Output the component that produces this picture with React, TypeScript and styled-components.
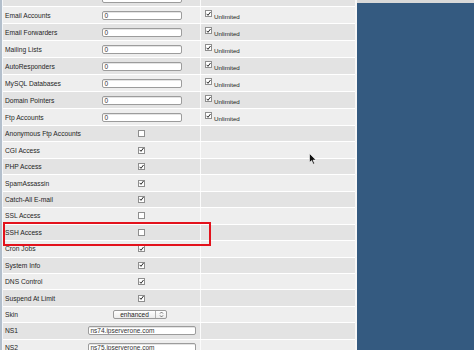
import React from "react";
import styled, { createGlobalStyle } from "styled-components";

const Global = createGlobalStyle`
  html, body { margin: 0; padding: 0; }
  body {
    width: 474px;
    height: 350px;
    overflow: hidden;
    background: #ffffff;
    font-family: "Liberation Sans", Arial, sans-serif;
  }
`;

const Page = styled.div`
  position: relative;
  display: flex;
  width: 474px;
  height: 350px;
  overflow: hidden;
`;

const LeftFrame = styled.div`
  width: 2px;
  background: #b3bfcc;
  border-right: 1px solid #f4f6f8;
  flex: none;
`;

const Viewport = styled.div`
  width: 352px;
  flex: none;
  overflow: hidden;
  border-right: 2px solid #f7f7f7;
`;

const Table = styled.div`
  display: flex;
  flex-direction: column;
  margin-top: -10px;
`;

const Row = styled.div<{ $dark: boolean; $h: number }>`
  display: grid;
  grid-template-columns: 80px 117px 1px 1fr;
  height: ${(p) => p.$h}px;
  border-bottom: 1px solid #ffffff;
  background: ${(p) => (p.$dark ? "#e3e3e3" : "#eeeeee")};
  flex: none;
`;

const Label = styled.div`
  display: flex;
  align-items: center;
  padding-left: 2px;
  font-size: 6.7px;
  color: #1e1e1e;
  white-space: nowrap;
`;

const Mid = styled.div`
  display: flex;
  align-items: center;
  justify-content: center;
`;

const VLine = styled.div`
  background: #fbfbfb;
`;

const Right = styled.div`
  display: flex;
  align-items: center;
  padding-left: 4px;
  gap: 2px;
`;

const TextInput = styled.div<{ $w: number }>`
  width: ${(p) => p.$w}px;
  height: 9px;
  box-sizing: border-box;
  border: 1px solid #9c9c9c;
  border-radius: 2px;
  background: #ffffff;
  font-size: 6.5px;
  line-height: 7px;
  padding-left: 2px;
  color: #333;
  white-space: nowrap;
  overflow: hidden;
  box-shadow: inset 0 1px 0 #e4e4e4;
`;

const Box = styled.span<{ $up?: boolean }>`
  display: inline-flex;
  width: 7px;
  height: 7px;
  box-sizing: border-box;
  border: 1px solid #8e8e8e;
  background: #ffffff;
  align-items: center;
  justify-content: center;
  margin-bottom: ${(p) => (p.$up ? "3px" : "0")};
  flex: none;
`;

const Unl = styled.span`
  font-size: 6.2px;
  color: #222;
  margin-top: 3px;
`;

const Select = styled.div`
  display: flex;
  align-items: stretch;
  width: 54px;
  height: 9px;
  box-sizing: border-box;
  border: 1px solid #9a9a9a;
  border-radius: 2px;
  background: linear-gradient(#ffffff, #ececec);
  margin-right: 3px;
`;

const SelText = styled.span`
  flex: 1;
  font-size: 6.5px;
  line-height: 7px;
  text-align: center;
  color: #222;
`;

const SelBtn = styled.span`
  width: 10px;
  border-left: 1px solid #b0b0b0;
  display: flex;
  align-items: center;
  justify-content: center;
`;

const Blue = styled.div`
  flex: 1;
  background: #345a80;
  border-top: 3px solid #d9d9d9;
`;

const Highlight = styled.div`
  position: absolute;
  left: 3px;
  top: 222px;
  width: 208px;
  height: 24px;
  box-sizing: border-box;
  border: 2.5px solid #e3121c;
  pointer-events: none;
`;

const Cursor = styled.svg`
  position: absolute;
  left: 309px;
  top: 153px;
`;

const Check = () => (
  <svg width="6" height="6" viewBox="0 0 6 6">
    <path d="M0.8 2.8 L2.4 4.6 L5.4 0.6" fill="none" stroke="#111" strokeWidth="1.1" />
  </svg>
);

const CheckBox = ({ checked, up }: { checked: boolean; up?: boolean }) => (
  <Box $up={up}>{checked ? <Check /> : null}</Box>
);

type RowDef =
  | { kind: "top" }
  | { kind: "num"; label: string }
  | { kind: "chk"; label: string; on: boolean }
  | { kind: "skin"; label: string }
  | { kind: "ns"; label: string; value: string };

const rows: RowDef[] = [
  { kind: "top" },
  { kind: "num", label: "Email Accounts" },
  { kind: "num", label: "Email Forwarders" },
  { kind: "num", label: "Mailing Lists" },
  { kind: "num", label: "AutoResponders" },
  { kind: "num", label: "MySQL Databases" },
  { kind: "num", label: "Domain Pointers" },
  { kind: "num", label: "Ftp Accounts" },
  { kind: "chk", label: "Anonymous Ftp Accounts", on: false },
  { kind: "chk", label: "CGI Access", on: true },
  { kind: "chk", label: "PHP Access", on: true },
  { kind: "chk", label: "SpamAssassin", on: true },
  { kind: "chk", label: "Catch-All E-mail", on: true },
  { kind: "chk", label: "SSL Access", on: false },
  { kind: "chk", label: "SSH Access", on: false },
  { kind: "chk", label: "Cron Jobs", on: true },
  { kind: "chk", label: "System Info", on: true },
  { kind: "chk", label: "DNS Control", on: true },
  { kind: "chk", label: "Suspend At Limit", on: true },
  { kind: "skin", label: "Skin" },
  { kind: "ns", label: "NS1", value: "ns74.ipserverone.com" },
  { kind: "ns", label: "NS2", value: "ns75.ipserverone.com" },
];

export default function App() {
  return (
    <>
      <Global />
      <Page>
        <LeftFrame />
        <Viewport>
          <Table>
            {rows.map((r, i) => {
              const dark = i % 2 === 0;
              const h = r.kind === "num" || r.kind === "top" ? 16 : 15.45;
              return (
                <Row key={i} $dark={dark} $h={h}>
                  <Label>{r.kind === "top" ? "" : r.label}</Label>
                  <Mid>
                    {r.kind === "top" && <TextInput $w={80} />}
                    {r.kind === "num" && <TextInput $w={80}>0</TextInput>}
                    {r.kind === "chk" && <CheckBox checked={r.on} />}
                    {r.kind === "skin" && (
                      <Select>
                        <SelText>enhanced</SelText>
                        <SelBtn>
                          <svg width="5" height="7" viewBox="0 0 5 7">
                            <path d="M1 2.6 L2.5 1 L4 2.6 M1 4.4 L2.5 6 L4 4.4" fill="none" stroke="#555" strokeWidth="0.8" />
                          </svg>
                        </SelBtn>
                      </Select>
                    )}
                    {r.kind === "ns" && <TextInput $w={108}>{r.value}</TextInput>}
                  </Mid>
                  <VLine />
                  <Right>
                    {r.kind === "num" && (
                      <>
                        <CheckBox checked up />
                        <Unl>Unlimited</Unl>
                      </>
                    )}
                  </Right>
                </Row>
              );
            })}
          </Table>
        </Viewport>
        <Blue />
        <Highlight />
        <Cursor width="8" height="12" viewBox="0 0 8 12">
          <path d="M0.5 0.5 L0.5 9.5 L2.6 7.6 L4.2 11.2 L5.6 10.6 L4 7.1 L7 7.1 Z" fill="#111" stroke="#fff" strokeWidth="0.6" />
        </Cursor>
      </Page>
    </>
  );
}
